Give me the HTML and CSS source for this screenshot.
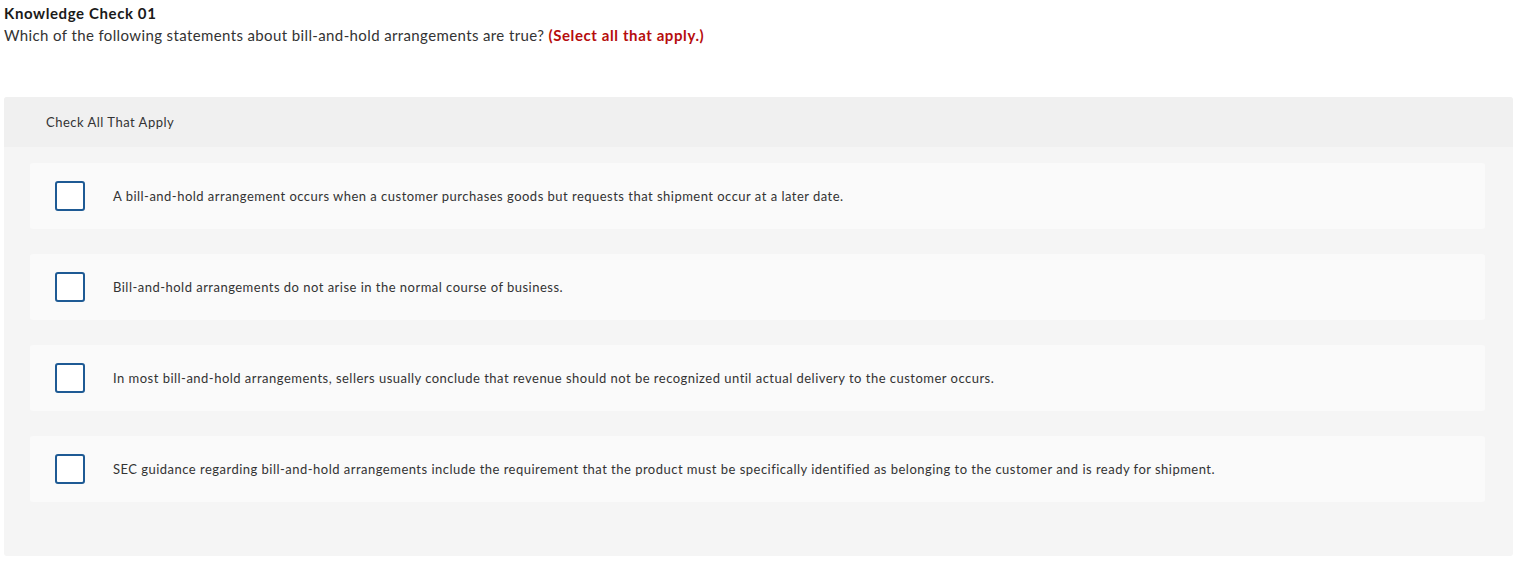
FILE: index.html
```html
<!DOCTYPE html>
<html>
<head>
<meta charset="utf-8">
<link rel="stylesheet" href="styles.css">
</head>
<body>
<div class="page">
  <div class="intro">
    <div class="title">Knowledge Check 01</div>
    <div class="question">Which of the following statements about bill-and-hold arrangements are true? <strong class="hint">(Select all that apply.)</strong></div>
  </div>
  <div class="panel">
    <div class="panel-head">Check All That Apply</div>
    <div class="panel-body">
      <label class="option"><span class="box"></span><span class="opt-text">A bill-and-hold arrangement occurs when a customer purchases goods but requests that shipment occur at a later date.</span></label>
      <label class="option"><span class="box"></span><span class="opt-text">Bill-and-hold arrangements do not arise in the normal course of business.</span></label>
      <label class="option"><span class="box"></span><span class="opt-text">In most bill-and-hold arrangements, sellers usually conclude that revenue should not be recognized until actual delivery to the customer occurs.</span></label>
      <label class="option"><span class="box"></span><span class="opt-text">SEC guidance regarding bill-and-hold arrangements include the requirement that the product must be specifically identified as belonging to the customer and is ready for shipment.</span></label>
    </div>
  </div>
</div>
</body>
</html>
```
FILE: styles.css
```css
* { box-sizing: border-box; }
html, body { margin: 0; padding: 0; background: #fff; }
body {
  font-family: "Lato", "Liberation Sans", sans-serif;
  color: #333;
}
.page {
  padding: 4px 12px 0 4px;
}
.intro {
  height: 93px;
}
.title {
  font-size: 15px;
  font-weight: 700;
  letter-spacing: 0.6px;
  color: #1a1a1a;
  line-height: 18px;
  margin-bottom: 3px;
}
.question {
  font-size: 15px;
  letter-spacing: 0.38px;
  line-height: 20px;
  color: #333;
}
.hint {
  color: #b60d0d;
  font-weight: 700;
  letter-spacing: 0.6px;
}
.panel {
  border-radius: 3px;
  overflow: hidden;
  background: #f5f5f5;
}
.panel-head {
  background: #f0f0f0;
  height: 50px;
  padding-left: 42px;
  display: flex;
  align-items: center;
  font-size: 13px;
  letter-spacing: 0.5px;
  color: #333;
}
.panel-body {
  padding: 16px 28px 54px 26px;
  display: flex;
  flex-direction: column;
  gap: 25px;
}
.option {
  display: flex;
  align-items: center;
  height: 66px;
  background: #fafafa;
  border-radius: 3px;
  padding-left: 25px;
}
.box {
  flex: none;
  width: 30px;
  height: 30px;
  border: 2px solid #1e5a94;
  border-radius: 3px;
  background: #fff;
  margin-right: 28px;
}
.opt-text {
  font-size: 13px;
  letter-spacing: 0.48px;
  color: #333;
}
```
